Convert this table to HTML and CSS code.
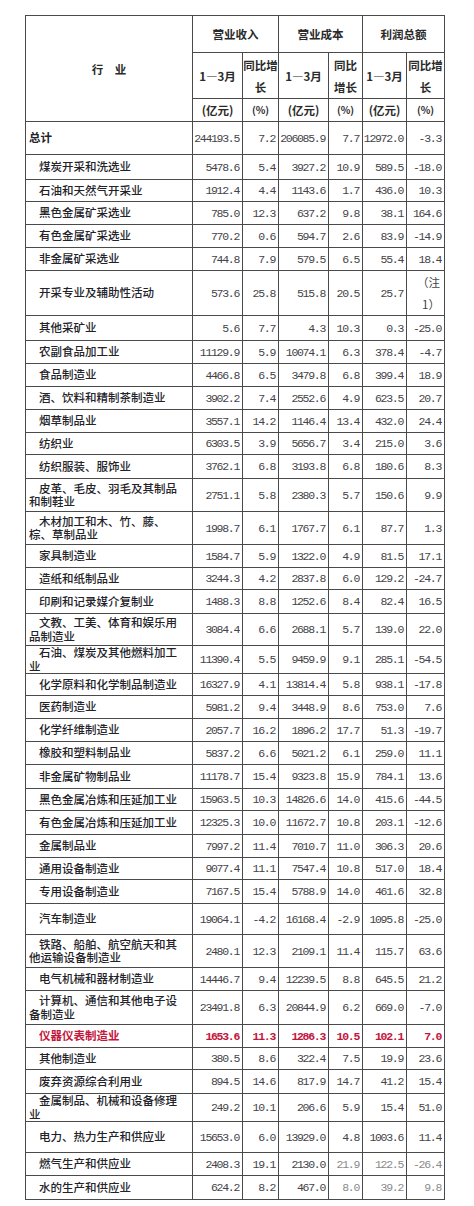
FILE: index.html
```
<!DOCTYPE html>
<html lang="zh-CN">
<head>
<meta charset="utf-8">
<title>规模以上工业企业主要财务指标</title>
<link rel="stylesheet" href="styles.css">
</head>
<body>
<table class="data">
<colgroup>
<col class="c-name"><col class="c-amt"><col class="c-pct"><col class="c-amt2"><col class="c-pct2"><col class="c-amt3"><col class="c-pct3">
</colgroup>
<tbody>
<tr class="h37">
<td class="hd" rowspan="3">行　业</td>
<td class="hd big" colspan="2">营业收入</td>
<td class="hd big" colspan="2">营业成本</td>
<td class="hd big" colspan="2">利润总额</td>
</tr>
<tr class="h46">
<td class="hd">1—3月</td><td class="hd">同比增<br>长</td>
<td class="hd">1—3月</td><td class="hd">同比<br>增长</td>
<td class="hd">1—3月</td><td class="hd">同比增<br>长</td>
</tr>
<tr class="h23">
<td class="hd">(亿元)</td><td class="hd pc">(%)</td>
<td class="hd">(亿元)</td><td class="hd pc">(%)</td>
<td class="hd">(亿元)</td><td class="hd pc">(%)</td>
</tr>
<tr class="h33"><td class="nm total">总计</td><td class="n">244193.5</td><td class="n">7.2</td><td class="n">206085.9</td><td class="n">7.7</td><td class="n">12972.0</td><td class="n">-3.3</td></tr>
<tr class="h25"><td class="nm ind">煤炭开采和洗选业</td><td class="n">5478.6</td><td class="n">5.4</td><td class="n">3927.2</td><td class="n">10.9</td><td class="n">589.5</td><td class="n">-18.0</td></tr>
<tr class="h22"><td class="nm ind">石油和天然气开采业</td><td class="n">1912.4</td><td class="n">4.4</td><td class="n">1143.6</td><td class="n">1.7</td><td class="n">436.0</td><td class="n">10.3</td></tr>
<tr class="h23"><td class="nm ind">黑色金属矿采选业</td><td class="n">785.0</td><td class="n">12.3</td><td class="n">637.2</td><td class="n">9.8</td><td class="n">38.1</td><td class="n">164.6</td></tr>
<tr class="h23"><td class="nm ind">有色金属矿采选业</td><td class="n">770.2</td><td class="n">0.6</td><td class="n">594.7</td><td class="n">2.6</td><td class="n">83.9</td><td class="n">-14.9</td></tr>
<tr class="h23"><td class="nm ind">非金属矿采选业</td><td class="n">744.8</td><td class="n">7.9</td><td class="n">579.5</td><td class="n">6.5</td><td class="n">55.4</td><td class="n">18.4</td></tr>
<tr class="h44"><td class="nm ind">开采专业及辅助性活动</td><td class="n">573.6</td><td class="n">25.8</td><td class="n">515.8</td><td class="n">20.5</td><td class="n">25.7</td><td class="note">（注<br>1）</td></tr>
<tr class="h25"><td class="nm ind">其他采矿业</td><td class="n">5.6</td><td class="n">7.7</td><td class="n">4.3</td><td class="n">10.3</td><td class="n">0.3</td><td class="n">-25.0</td></tr>
<tr class="h23"><td class="nm ind">农副食品加工业</td><td class="n">11129.9</td><td class="n">5.9</td><td class="n">10074.1</td><td class="n">6.3</td><td class="n">378.4</td><td class="n">-4.7</td></tr>
<tr class="h23"><td class="nm ind">食品制造业</td><td class="n">4466.8</td><td class="n">6.5</td><td class="n">3479.8</td><td class="n">6.8</td><td class="n">399.4</td><td class="n">18.9</td></tr>
<tr class="h23"><td class="nm ind">酒、饮料和精制茶制造业</td><td class="n">3902.2</td><td class="n">7.4</td><td class="n">2552.6</td><td class="n">4.9</td><td class="n">623.5</td><td class="n">20.7</td></tr>
<tr class="h23"><td class="nm ind">烟草制品业</td><td class="n">3557.1</td><td class="n">14.2</td><td class="n">1146.4</td><td class="n">13.4</td><td class="n">432.0</td><td class="n">24.4</td></tr>
<tr class="h22"><td class="nm ind">纺织业</td><td class="n">6303.5</td><td class="n">3.9</td><td class="n">5656.7</td><td class="n">3.4</td><td class="n">215.0</td><td class="n">3.6</td></tr>
<tr class="h24"><td class="nm ind">纺织服装、服饰业</td><td class="n">3762.1</td><td class="n">6.8</td><td class="n">3193.8</td><td class="n">6.8</td><td class="n">180.6</td><td class="n">8.3</td></tr>
<tr class="h33"><td class="nm ind">皮革、毛皮、羽毛及其制品<br>和制鞋业</td><td class="n">2751.1</td><td class="n">5.8</td><td class="n">2380.3</td><td class="n">5.7</td><td class="n">150.6</td><td class="n">9.9</td></tr>
<tr class="h33"><td class="nm ind">木材加工和木、竹、藤、<br>棕、草制品业</td><td class="n">1998.7</td><td class="n">6.1</td><td class="n">1767.7</td><td class="n">6.1</td><td class="n">87.7</td><td class="n">1.3</td></tr>
<tr class="h23"><td class="nm ind">家具制造业</td><td class="n">1584.7</td><td class="n">5.9</td><td class="n">1322.0</td><td class="n">4.9</td><td class="n">81.5</td><td class="n">17.1</td></tr>
<tr class="h22"><td class="nm ind">造纸和纸制品业</td><td class="n">3244.3</td><td class="n">4.2</td><td class="n">2837.8</td><td class="n">6.0</td><td class="n">129.2</td><td class="n">-24.7</td></tr>
<tr class="h24"><td class="nm ind">印刷和记录媒介复制业</td><td class="n">1488.3</td><td class="n">8.8</td><td class="n">1252.6</td><td class="n">8.4</td><td class="n">82.4</td><td class="n">16.5</td></tr>
<tr class="h32"><td class="nm ind">文教、工美、体育和娱乐用<br>品制造业</td><td class="n">3084.4</td><td class="n">6.6</td><td class="n">2688.1</td><td class="n">5.7</td><td class="n">139.0</td><td class="n">22.0</td></tr>
<tr class="h28"><td class="nm ind">石油、煤炭及其他燃料加工<br>业</td><td class="n">11390.4</td><td class="n">5.5</td><td class="n">9459.9</td><td class="n">9.1</td><td class="n">285.1</td><td class="n">-54.5</td></tr>
<tr class="h22"><td class="nm ind">化学原料和化学制品制造业</td><td class="n">16327.9</td><td class="n">4.1</td><td class="n">13814.4</td><td class="n">5.8</td><td class="n">938.1</td><td class="n">-17.8</td></tr>
<tr class="h23"><td class="nm ind">医药制造业</td><td class="n">5981.2</td><td class="n">9.4</td><td class="n">3448.9</td><td class="n">8.6</td><td class="n">753.0</td><td class="n">7.6</td></tr>
<tr class="h23"><td class="nm ind">化学纤维制造业</td><td class="n">2057.7</td><td class="n">16.2</td><td class="n">1896.2</td><td class="n">17.7</td><td class="n">51.3</td><td class="n">-19.7</td></tr>
<tr class="h23"><td class="nm ind">橡胶和塑料制品业</td><td class="n">5837.2</td><td class="n">6.6</td><td class="n">5021.2</td><td class="n">6.1</td><td class="n">259.0</td><td class="n">11.1</td></tr>
<tr class="h24"><td class="nm ind">非金属矿物制品业</td><td class="n">11178.7</td><td class="n">15.4</td><td class="n">9323.8</td><td class="n">15.9</td><td class="n">784.1</td><td class="n">13.6</td></tr>
<tr class="h22"><td class="nm ind">黑色金属冶炼和压延加工业</td><td class="n">15963.5</td><td class="n">10.3</td><td class="n">14826.6</td><td class="n">14.0</td><td class="n">415.6</td><td class="n">-44.5</td></tr>
<tr class="h24"><td class="nm ind">有色金属冶炼和压延加工业</td><td class="n">12325.3</td><td class="n">10.0</td><td class="n">11672.7</td><td class="n">10.8</td><td class="n">203.1</td><td class="n">-12.6</td></tr>
<tr class="h23"><td class="nm ind">金属制品业</td><td class="n">7997.2</td><td class="n">11.4</td><td class="n">7010.7</td><td class="n">11.0</td><td class="n">306.3</td><td class="n">20.6</td></tr>
<tr class="h22"><td class="nm ind">通用设备制造业</td><td class="n">9077.4</td><td class="n">11.1</td><td class="n">7547.4</td><td class="n">10.8</td><td class="n">517.0</td><td class="n">18.4</td></tr>
<tr class="h24"><td class="nm ind">专用设备制造业</td><td class="n">7167.5</td><td class="n">15.4</td><td class="n">5788.9</td><td class="n">14.0</td><td class="n">461.6</td><td class="n">32.8</td></tr>
<tr class="h31"><td class="nm ind">汽车制造业</td><td class="n">19064.1</td><td class="n">-4.2</td><td class="n">16168.4</td><td class="n">-2.9</td><td class="n">1095.8</td><td class="n">-25.0</td></tr>
<tr class="h33"><td class="nm ind">铁路、船舶、航空航天和其<br>他运输设备制造业</td><td class="n">2480.1</td><td class="n">12.3</td><td class="n">2109.1</td><td class="n">11.4</td><td class="n">115.7</td><td class="n">63.6</td></tr>
<tr class="h23"><td class="nm ind">电气机械和器材制造业</td><td class="n">14446.7</td><td class="n">9.4</td><td class="n">12239.5</td><td class="n">8.8</td><td class="n">645.5</td><td class="n">21.2</td></tr>
<tr class="h34"><td class="nm ind">计算机、通信和其他电子设<br>备制造业</td><td class="n">23491.8</td><td class="n">6.3</td><td class="n">20844.9</td><td class="n">6.2</td><td class="n">669.0</td><td class="n">-7.0</td></tr>
<tr class="h23 hl"><td class="nm ind">仪器仪表制造业</td><td class="n">1653.6</td><td class="n">11.3</td><td class="n">1286.3</td><td class="n">10.5</td><td class="n">102.1</td><td class="n">7.0</td></tr>
<tr class="h22"><td class="nm ind">其他制造业</td><td class="n">380.5</td><td class="n">8.6</td><td class="n">322.4</td><td class="n">7.5</td><td class="n">19.9</td><td class="n">23.6</td></tr>
<tr class="h24"><td class="nm ind">废弃资源综合利用业</td><td class="n">894.5</td><td class="n">14.6</td><td class="n">817.9</td><td class="n">14.7</td><td class="n">41.2</td><td class="n">15.4</td></tr>
<tr class="h26"><td class="nm ind">金属制品、机械和设备修理<br>业</td><td class="n">249.2</td><td class="n">10.1</td><td class="n">206.6</td><td class="n">5.9</td><td class="n">15.4</td><td class="n">51.0</td></tr>
<tr class="h31"><td class="nm ind">电力、热力生产和供应业</td><td class="n">15653.0</td><td class="n">6.0</td><td class="n">13929.0</td><td class="n">4.8</td><td class="n">1003.6</td><td class="n">11.4</td></tr>
<tr class="h23"><td class="nm ind">燃气生产和供应业</td><td class="n">2408.3</td><td class="n">19.1</td><td class="n">2130.0</td><td class="n faint">21.9</td><td class="n faint">122.5</td><td class="n faint">-26.4</td></tr>
<tr class="h24"><td class="nm ind">水的生产和供应业</td><td class="n">624.2</td><td class="n">8.2</td><td class="n">467.0</td><td class="n faint">8.0</td><td class="n faint">39.2</td><td class="n faint">9.8</td></tr>
</tbody>
</table>
</body>
</html>
```
FILE: styles.css
```
html, body {
  margin: 0;
  padding: 0;
  background: #ffffff;
}

body {
  padding: 15px 0 0 25px;
}

.data {
  border-collapse: collapse;
  table-layout: fixed;
  width: 419px;
  font-family: "Noto Sans CJK SC", "Noto Sans", sans-serif;
  font-size: 11.5px;
  color: #222228;
}

.c-name { width: 167px; }
.c-amt { width: 50px; }
.c-pct { width: 36px; }
.c-amt2 { width: 50px; }
.c-pct2 { width: 34px; }
.c-amt3 { width: 44px; }
.c-pct3 { width: 38px; }

.data td {
  border: 1px solid #4a4a4a;
  padding: 0;
  vertical-align: middle;
}

.hd {
  text-align: center;
  font-weight: 700;
  line-height: 22px;
  white-space: nowrap;
  color: #2a2a2a;
}

.hd.big {
  font-weight: 700;
}

.hd.pc {
  font-size: 10px;
}

.nm {
  padding-left: 3px !important;
  line-height: 13.5px;
  white-space: nowrap;
  font-weight: 500;
}

.nm.ind {
  text-indent: 10px;
}

.nm.total {
  font-weight: 700;
}

.n {
  font-family: "Liberation Mono", "DejaVu Sans Mono", monospace;
  font-size: 11.5px;
  letter-spacing: -1.3px;
  text-align: right;
  padding-right: 3px !important;
  color: #444448;
  white-space: nowrap;
}

.note {
  text-align: right;
  padding-right: 4px !important;
  line-height: 22px;
  color: #444448;
}

.n.faint {
  color: #8a8a8a;
}

.hl .nm,
.hl .n {
  color: #c4163c;
  font-weight: 700;
}

.h22 { height: 22px; }
.h23 { height: 23px; }
.h24 { height: 24px; }
.h25 { height: 25px; }
.h26 { height: 26px; }
.h28 { height: 28px; }
.h31 { height: 31px; }
.h32 { height: 32px; }
.h33 { height: 33px; }
.h34 { height: 34px; }
.h37 { height: 37px; }
.h44 { height: 44px; }
.h46 { height: 46px; }
```
